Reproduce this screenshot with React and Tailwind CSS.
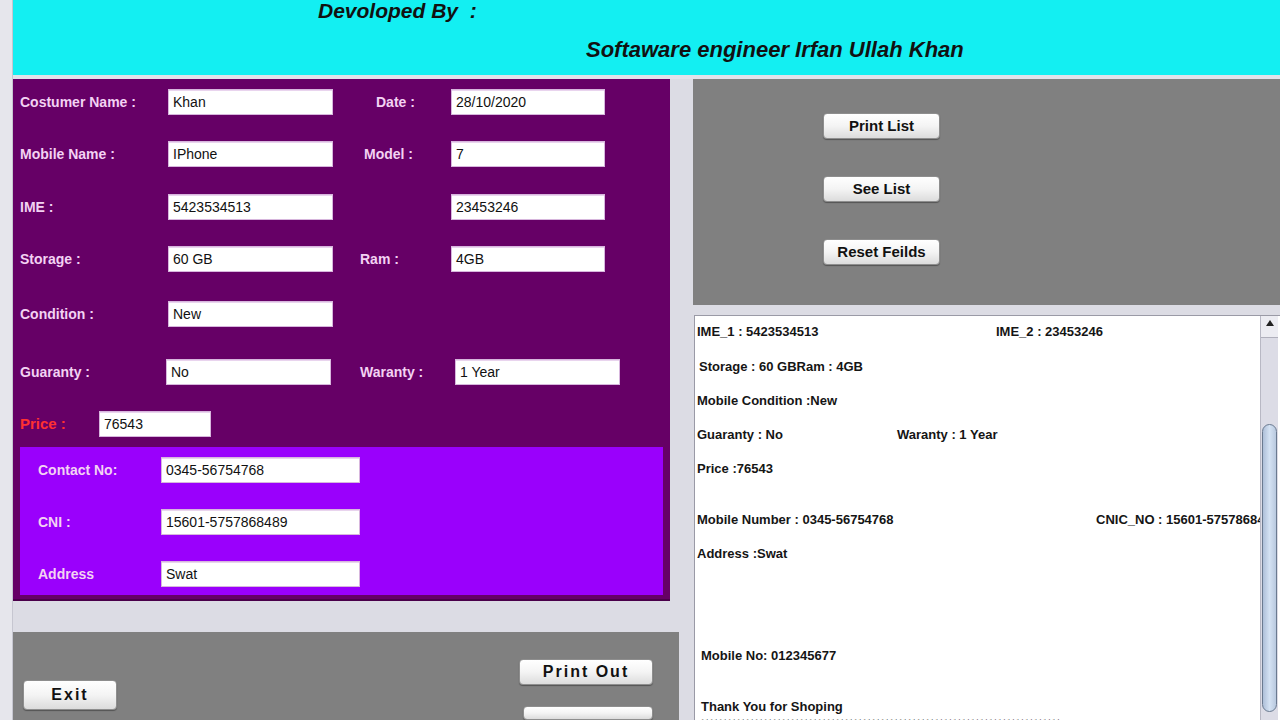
import React from 'react';

const font = { fontFamily: '"Liberation Sans", Arial, sans-serif' };

function Field({ value, className = 'w-[165px]' }) {
  return (
    <div className={`h-[26px] bg-white border border-[#d7b6dd] shadow-[inset_0_1px_0_#e9d4ee] pl-[4px] flex items-center text-[14px] text-[#111] ${className}`}>
      {value}
    </div>
  );
}

function Label({ children, className = '' }) {
  return <span className={`text-[14px] font-bold text-[#f3d2f3] whitespace-nowrap ${className}`}>{children}</span>;
}

function Btn({ children, className = '' }) {
  return (
    <div className={`flex items-center justify-center rounded-[4px] border border-[#8e8e8e] bg-gradient-to-b from-white via-[#f4f4f4] to-[#dcdcdc] shadow-[0_1px_1px_rgba(0,0,0,0.35)] font-bold text-[#111] ${className}`}>
      {children}
    </div>
  );
}

function PurplePanel() {
  return (
    <div className="w-[657px] h-[522px] shrink-0 bg-[#660066] border-b-2 border-[#4a004a] flex flex-col pl-[7px]">
      {/* row 1 */}
      <div className="flex items-center mt-[10px]">
        <Label className="w-[148px]">Costumer Name :</Label>
        <Field value="Khan" />
        <Label className="ml-[43px] w-[75px]">Date :</Label>
        <Field value="28/10/2020" className="w-[154px]" />
      </div>
      {/* row 2 */}
      <div className="flex items-center mt-[26px]">
        <Label className="w-[148px]">Mobile Name :</Label>
        <Field value="IPhone" />
        <Label className="ml-[31px] w-[87px]">Model :</Label>
        <Field value="7" className="w-[154px]" />
      </div>
      {/* row 3 */}
      <div className="flex items-center mt-[27px]">
        <Label className="w-[148px]">IME :</Label>
        <Field value="5423534513" />
        <div className="w-[118px]" />
        <Field value="23453246" className="w-[154px]" />
      </div>
      {/* row 4 */}
      <div className="flex items-center mt-[26px]">
        <Label className="w-[148px]">Storage :</Label>
        <Field value="60 GB" />
        <Label className="ml-[27px] w-[91px]">Ram :</Label>
        <Field value="4GB" className="w-[154px]" />
      </div>
      {/* row 5 */}
      <div className="flex items-center mt-[29px]">
        <Label className="w-[148px]">Condition :</Label>
        <Field value="New" />
      </div>
      {/* row 6 */}
      <div className="flex items-center mt-[32px]">
        <Label className="w-[146px]">Guaranty :</Label>
        <Field value="No" />
        <Label className="ml-[29px] w-[95px]">Waranty :</Label>
        <Field value="1 Year" />
      </div>
      {/* price */}
      <div className="flex items-center mt-[26px]">
        <span className="w-[79px] text-[15px] font-bold text-[#ff3131]">Price :</span>
        <Field value="76543" className="w-[112px]" />
      </div>
      {/* contact box */}
      <div className="mt-[10px] w-[643px] h-[148px] bg-[#9a00fc] flex flex-col pl-[18px]">
        <div className="flex items-center mt-[10px]">
          <Label className="w-[123px]">Contact No:</Label>
          <Field value="0345-56754768" className="w-[199px]" />
        </div>
        <div className="flex items-center mt-[26px]">
          <Label className="w-[123px]">CNI :</Label>
          <Field value="15601-5757868489" className="w-[199px]" />
        </div>
        <div className="flex items-center mt-[26px]">
          <Label className="w-[123px]">Address</Label>
          <Field value="Swat" className="w-[199px]" />
        </div>
      </div>
    </div>
  );
}

function BottomPanel() {
  return (
    <div className="mt-[31px] w-[666px] flex-1 min-h-0 bg-[#808080] flex">
      <Btn className="ml-[10px] mt-[48px] w-[94px] h-[30px] text-[16px] tracking-[2px]">Exit</Btn>
      <div className="ml-auto mr-[26px] pt-[27px] flex flex-col items-end gap-[21px]">
        <Btn className="w-[134px] h-[31px] text-[16px] tracking-[2px]">Print Out</Btn>
        <Btn className="w-[130px] h-[31px] text-[16px] tracking-[2px]" />
      </div>
    </div>
  );
}

function Receipt() {
  const line = 'h-[20px] leading-[20px] whitespace-nowrap';
  return (
    <div className="flex-1 min-w-0 overflow-hidden flex flex-col pl-[2px] text-[13px] font-bold text-[#151515]">
      <div className={`${line} mt-[6px] flex`}>
        <span className="w-[299px] shrink-0">IME_1 : 5423534513</span>
        <span>IME_2 : 23453246</span>
      </div>
      <div className={`${line} mt-[15px] pl-[2px]`}>Storage : 60 GBRam : 4GB</div>
      <div className={`${line} mt-[14px]`}>Mobile Condition :New</div>
      <div className={`${line} mt-[14px] flex`}>
        <span className="w-[200px] shrink-0">Guaranty : No</span>
        <span>Waranty : 1 Year</span>
      </div>
      <div className={`${line} mt-[14px]`}>Price :76543</div>
      <div className={`${line} mt-[31px] flex`}>
        <span className="w-[399px] shrink-0">Mobile Number : 0345-56754768</span>
        <span className="shrink-0">CNIC_NO : 15601-5757868489</span>
      </div>
      <div className={`${line} mt-[14px]`}>Address :Swat</div>
      <div className={`${line} mt-[82px] pl-[4px]`}>Mobile No: 012345677</div>
      <div className={`${line} mt-[31px] pl-[4px]`}>Thank You for Shoping</div>
      <div className="h-[10px] leading-[10px] pl-[4px] text-[9px] font-normal tracking-[1px] whitespace-nowrap text-[#333]">
        {'*'.repeat(80)}
      </div>
    </div>
  );
}

function Scrollbar() {
  return (
    <div className="w-[18px] shrink-0 mr-[2px] border-l border-[#b8b8c4] bg-[#dcdce6] flex flex-col">
      <div className="h-[22px] flex items-start justify-center pt-[4px] border-b border-[#b0b0bc] bg-[#ececf2]">
        <div className="w-0 h-0 border-l-[4px] border-r-[4px] border-b-[6px] border-l-transparent border-r-transparent border-b-[#222]" />
      </div>
      <div className="mt-[86px] h-[288px] mx-[1px] rounded-[8px] border border-[#6a7a90] bg-gradient-to-r from-[#aebfd8] via-[#d4e2f3] to-[#b9c9df]" />
    </div>
  );
}

export default function App() {
  return (
    <div className="w-[1280px] h-[720px] overflow-hidden bg-[#dcdce4] flex" style={font}>
      <div className="w-[13px] shrink-0 bg-[#e6e6ec] border-r border-[#c6c6d0]" />
      <div className="flex-1 min-w-0 min-h-0 flex flex-col">
        {/* Header */}
        <div className="h-[75px] shrink-0 bg-[#13eff2] flex flex-col italic font-bold text-[#111]">
          <div className="pl-[305px] h-[22px] leading-[22px] text-[21px]">Devoloped By &nbsp;:</div>
          <div className="pl-[573px] mt-[15px] h-[26px] leading-[26px] text-[22px]">Softaware engineer Irfan Ullah Khan</div>
        </div>
        <div className="h-[4px] shrink-0 bg-[#e2e2ea]" />
        <div className="flex-1 min-h-0 min-w-0 flex">
          {/* Left column */}
          <div className="w-[666px] shrink-0 flex flex-col">
            <PurplePanel />
            <BottomPanel />
          </div>
          {/* Right column */}
          <div className="ml-[14px] flex-1 min-w-0 flex flex-col">
            <div className="h-[226px] shrink-0 bg-[#808080] flex flex-col pl-[130px] pt-[34px] gap-[37px]">
              <Btn className="w-[117px] h-[26px] text-[15px]">Print List</Btn>
              <Btn className="w-[117px] h-[26px] text-[15px]">See List</Btn>
              <Btn className="w-[117px] h-[26px] text-[15px]">Reset Feilds</Btn>
            </div>
            <div className="mt-[10px] ml-[1px] flex-1 min-h-0 bg-white border-l border-t border-[#9a9aa6] flex overflow-hidden">
              <Receipt />
              <Scrollbar />
            </div>
          </div>
        </div>
      </div>
    </div>
  );
}
